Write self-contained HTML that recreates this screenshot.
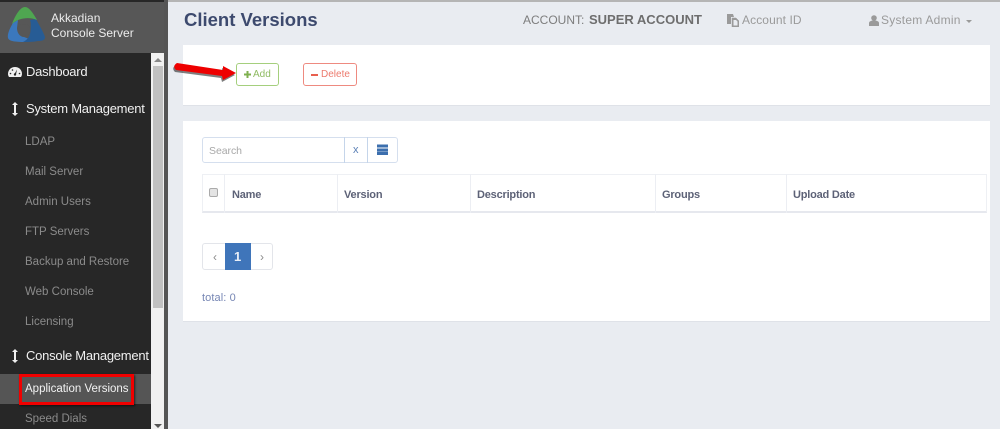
<!DOCTYPE html>
<html><head><meta charset="utf-8"><style>
html,body{margin:0;padding:0}
body{width:1000px;height:429px;position:relative;overflow:hidden;background:#e9ecf1;font-family:"Liberation Sans",sans-serif}
div{position:absolute;box-sizing:border-box}
.t{position:absolute;white-space:nowrap;line-height:1}
.m{font-size:11.5px;color:#8b8b8b;left:25px}
.h{font-size:13px;color:#f0f0f0;left:26px;letter-spacing:-.25px}
.th{font-size:11px;font-weight:bold;color:#5d6277;top:190px;letter-spacing:-.2px}
.vl{background:#eceef3;top:174px;width:1px;height:39px}
</style></head><body>
<div style="left:0;top:0;width:1000px;height:2px;background:#b5b5b5"></div>
<div style="left:0;top:0;width:168px;height:429px;background:#272727"></div>
<div style="left:0;top:2px;width:168px;height:51px;background:#575757"></div>
<div style="left:164px;top:0;width:4px;height:429px;background:#555"></div>
<svg style="position:absolute;left:0;top:0" width="50" height="50" viewBox="0 0 50 50">
<path d="M13 23C10 28 7 34 8 38C9 41 14 42 25 42C28 42 30 41 32 40L24 37C20 37 17 33 17 28L18 20Z" fill="#3b78bd"/>
<path d="M36 19C39 25 43 31 45 37C45 40 43 41 38 41C33 42 28 42 23 42C27 40 30 37 30.500 31C31 26 31 22 30 20Z" fill="#275c95"/>
<ellipse cx="24" cy="30" rx="6.500" ry="6" fill="#575757"/>
<path d="M12 24C15 16 20 7 25 7C29 7 33 13 37 20C31 17 19 17 12 24Z" fill="#4fa651"/>
</svg>
<span class="t" style="left:51px;top:12px;font-size:12px;color:#ececec">Akkadian</span>
<span class="t" style="left:51px;top:27px;font-size:12px;color:#ececec">Console Server</span>

<div style="left:151px;top:53px;width:13px;height:376px;background:#f1f1f1"></div>
<div style="left:153px;top:66px;width:10px;height:242px;background:#c1c1c1"></div>
<div style="left:154px;top:58px;width:0;height:0;border:4px solid transparent;border-top:0;border-bottom:4px solid #888"></div>
<div style="left:154px;top:424px;width:0;height:0;border:4px solid transparent;border-bottom:0;border-top:4px solid #555"></div>

<svg style="position:absolute;left:8px;top:66px" width="14" height="12" viewBox="0 0 14 12"><path d="M7 1C3 1 0 4 0 8C0 9 .4 10 1 11H13C13.600 10 14 9 14 8C14 4 11 1 7 1Z" fill="#f0f0f0"/><path d="M6.500 8L9 3.500L8 8.500Z" fill="#272727"/><circle cx="7" cy="8.500" r="1.200" fill="#272727"/><circle cx="2.500" cy="7.500" r=".8" fill="#272727"/><circle cx="11.500" cy="7.500" r=".8" fill="#272727"/><circle cx="4.500" cy="4" r=".8" fill="#272727"/></svg>
<span class="t h" style="top:65px">Dashboard</span>
<svg style="position:absolute;left:12px;top:102px" width="6" height="14" viewBox="0 0 6 14"><path d="M3 0L6 3H4V11H6L3 14L0 11H2V3H0Z" fill="#f0f0f0"/></svg>
<span class="t h" style="top:102px">System Management</span>
<span class="t m" style="top:137px">LDAP</span>
<span class="t m" style="top:167px">Mail Server</span>
<span class="t m" style="top:197px">Admin Users</span>
<span class="t m" style="top:227px">FTP Servers</span>
<span class="t m" style="top:257px">Backup and Restore</span>
<span class="t m" style="top:287px">Web Console</span>
<span class="t m" style="top:317px">Licensing</span>
<svg style="position:absolute;left:12px;top:349px" width="6" height="14" viewBox="0 0 6 14"><path d="M3 0L6 3H4V11H6L3 14L0 11H2V3H0Z" fill="#f0f0f0"/></svg>
<span class="t h" style="top:349px">Console Management</span>
<div style="left:0;top:374px;width:151px;height:30px;background:#555"></div>
<div style="left:19px;top:374px;width:115px;height:31px;border:3px solid #f00000;box-shadow:1px 1px 2px rgba(0,0,0,.6)"></div>
<span class="t m" style="top:384px;color:#f2f2f2">Application Versions</span>
<span class="t m" style="top:414px">Speed Dials</span>

<span class="t" style="left:184px;top:11px;font-size:18.500px;font-weight:bold;color:#3d4a6e">Client Versions</span>
<span class="t" style="left:523px;top:14px;font-size:12px;color:#7d7d7d">ACCOUNT:</span>
<span class="t" style="left:589px;top:13px;font-size:13px;font-weight:bold;color:#6e6e6e">SUPER ACCOUNT</span>
<svg style="position:absolute;left:727px;top:14px" width="12" height="13" viewBox="0 0 12 13"><path d="M0 0H6L7 3H4V10H0Z" fill="#9a9a9a"/><path d="M5 4H9L12 7V13H5Z" fill="#9a9a9a" stroke="#9a9a9a" stroke-width=".5"/><path d="M6.500 6H9L10.500 7.500V11.500H6.500Z" fill="#e9ecf1"/></svg>
<span class="t" style="left:742px;top:14px;font-size:12px;color:#9a9a9a;letter-spacing:.1px">Account ID</span>
<svg style="position:absolute;left:869px;top:15px" width="10" height="11" viewBox="0 0 10 11"><circle cx="5" cy="3" r="2.800" fill="#9a9a9a"/><path d="M0 11V8C0 6.500 2 5.500 5 5.500C8 5.500 10 6.500 10 8V11Z" fill="#9a9a9a"/></svg>
<span class="t" style="left:881px;top:14px;font-size:12px;color:#9a9a9a;letter-spacing:.25px">System Admin</span>
<div style="left:966px;top:20px;width:0;height:0;border:3px solid transparent;border-bottom:0;border-top:3px solid #9a9a9a"></div>

<div style="left:183px;top:45px;width:807px;height:61px;background:#fff;border-bottom:1px solid #dfe2e8"></div>
<div style="left:236px;top:63px;width:43px;height:23px;background:#fff;border:1px solid #a5cf7d;border-radius:3px"></div>
<svg style="position:absolute;left:244px;top:71px" width="7" height="7" viewBox="0 0 7 7"><path d="M2.500 0H4.500V2.500H7V4.500H4.500V7H2.500V4.500H0V2.500H2.500Z" fill="#7fb04f"/></svg>
<span class="t" style="left:253px;top:70px;font-size:10px;color:#8fbb63">Add</span>
<div style="left:303px;top:63px;width:54px;height:23px;background:#fff;border:1px solid #ee8a80;border-radius:3px"></div>
<div style="left:311px;top:74px;width:7px;height:2px;background:#e8604f"></div>
<span class="t" style="left:321px;top:70px;font-size:10px;color:#ec7a6d">Delete</span>
<svg style="position:absolute;left:170px;top:58px" width="68" height="26" viewBox="170 58 68 26"><path d="M177 63L223 70L223 66L236 73L223 80L222 76L176 70Q172 66 177 63Z" fill="#000" opacity=".5" transform="translate(-1 2)"/><path d="M177 63L223 70L223 66L236 73L223 80L222 76L176 70Q172 66 177 63Z" fill="#ee0000"/></svg>

<div style="left:183px;top:121px;width:807px;height:201px;background:#fff;border-bottom:1px solid #dfe2e8"></div>
<div style="left:202px;top:137px;width:196px;height:26px;border:1px solid #d5dfee;border-radius:3px;background:#fff"></div>
<div style="left:344px;top:137px;width:1px;height:26px;background:#c5d5ea"></div>
<div style="left:367px;top:137px;width:1px;height:26px;background:#c5d5ea"></div>
<span class="t" style="left:209px;top:146px;font-size:10.500px;color:#a8a8a8;letter-spacing:-.05px">Search</span>
<span class="t" style="left:353px;top:145px;font-size:11px;color:#5a7fb5">x</span>
<svg style="position:absolute;left:377px;top:144px" width="11" height="11" viewBox="0 0 11 11"><path d="M0 0.500H11V3.500H0ZM0 4.500H11V11H0Z" fill="#3c6fae"/><path d="M0 7.700H11" stroke="#fff" stroke-width=".5" opacity=".6"/></svg>

<div style="left:202px;top:174px;width:785px;height:39px;border:1px solid #eef0f4;border-bottom:2px solid #e6e8ee"></div>
<div class="vl" style="left:224px"></div><div class="vl" style="left:337px"></div><div class="vl" style="left:470px"></div><div class="vl" style="left:655px"></div><div class="vl" style="left:786px"></div>
<div style="left:209px;top:188px;width:9px;height:9px;background:#e4e4e4;border:1px solid #aaa;border-radius:2px"></div>
<span class="t th" style="left:232px">Name</span>
<span class="t th" style="left:344px">Version</span>
<span class="t th" style="left:477px">Description</span>
<span class="t th" style="left:662px">Groups</span>
<span class="t th" style="left:793px">Upload Date</span>

<div style="left:202px;top:243px;width:71px;height:27px;border:1px solid #e3e5ea;border-radius:3px"></div>
<div style="left:225px;top:243px;width:26px;height:27px;background:#3f75ba"></div>
<span class="t" style="left:213px;top:251px;font-size:12px;color:#8c8c8c">‹</span>
<span class="t" style="left:234px;top:250px;font-size:13px;font-weight:bold;color:#e8eef7">1</span>
<span class="t" style="left:260px;top:251px;font-size:12px;color:#8c8c8c">›</span>
<span class="t" style="left:202px;top:293px;font-size:11px;color:#7686b4;letter-spacing:.1px">total: 0</span>
</body></html>
